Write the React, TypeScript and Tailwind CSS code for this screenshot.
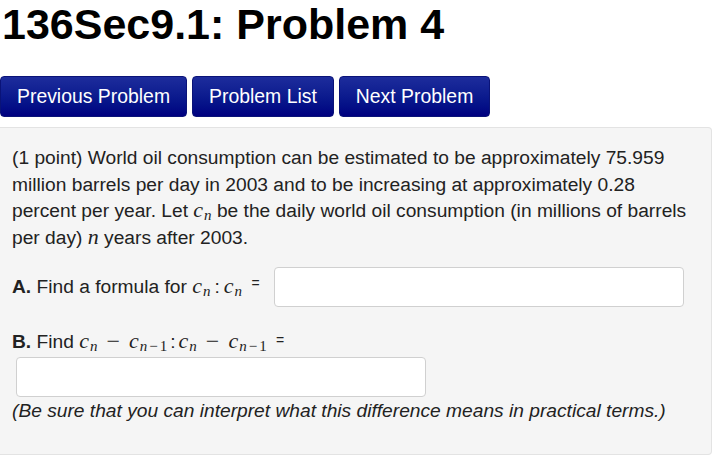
import React from 'react';

const Cn = ({ sub = 'n' }: { sub?: string }) => (
  <span className="font-['Liberation_Serif',serif] italic text-[22px] leading-none">
    c
    <span className="text-[15px] leading-none relative top-[3px] ml-[1px]">
      {sub === 'n' ? (
        <i>n</i>
      ) : (
        <>
          <i>n</i>
          <span className="not-italic mx-[2px]">−</span>
          <span className="not-italic">1</span>
        </>
      )}
    </span>
  </span>
);

const Minus = () => (
  <span className="font-['Liberation_Serif',serif] text-[24px] leading-none mx-[9px] relative top-[1px]">−</span>
);

const NavButton = ({ label }: { label: string }) => (
  <button className="h-[41px] px-[16px] rounded-[4px] border border-[#0a1378] bg-gradient-to-b from-[#1d2c9c] to-[#000080] text-white text-[19.4px] leading-none">
    {label}
  </button>
);

const App = () => {
  return (
    <div className="w-[723px] h-[460px] bg-white overflow-hidden font-['Liberation_Sans',Arial,sans-serif] text-[#1a1a1a]">
      <h1 className="pt-[3px] pl-[2px] text-[43px] leading-none font-bold text-black">136Sec9.1: Problem 4</h1>

      <div className="mt-[30px] flex gap-[5px]">
        <NavButton label="Previous Problem" />
        <NavButton label="Problem List" />
        <NavButton label="Next Problem" />
      </div>

      <div className="mt-[10px] w-[712px] h-[328px] bg-[#f5f5f5] border border-[#e3e3e3] border-l-0 rounded-r-[4px] pl-[12px] pr-[10px] pt-[17px] text-[19.2px] text-[#222]">
        <p className="leading-[26.5px]">
          (1 point) World oil consumption can be estimated to be approximately 75.959 million barrels per day in 2003 and to be increasing at approximately 0.28 percent per year. Let <Cn /> be the daily world oil consumption (in millions of barrels per day) <span className="font-['Liberation_Serif',serif] italic text-[22px] leading-none">n</span> years after 2003.
        </p>

        <div className="mt-[16px] flex items-center h-[40px]">
          <span><b>A.</b> Find a formula for <Cn /><span className="mx-[4px]">:</span><Cn /> <span className="text-[14px] align-top ml-[4px]">=</span></span>
          <div className="ml-[14px] w-[410px] h-[40px] bg-white border border-[#d0d0d0] rounded-[4px]" />
        </div>

        <div className="mt-[21px] h-[24px] leading-[24px] whitespace-nowrap">
          <b>B.</b> Find <Cn /><Minus /><Cn sub="n-1" /><span className="mx-[3px]">:</span><Cn /><Minus /><Cn sub="n-1" /> <span className="text-[14px] align-top ml-[4px]">=</span>
        </div>
        <div className="mt-[5px] ml-[4px] w-[410px] h-[40px] bg-white border border-[#d0d0d0] rounded-[4px]" />
        <p className="mt-[2px] italic leading-[24px]">(Be sure that you can interpret what this difference means in practical terms.)</p>
      </div>
    </div>
  );
};

export default App;
